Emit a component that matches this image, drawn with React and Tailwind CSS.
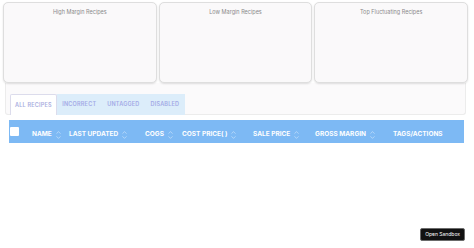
import { ChevronUp, ChevronDown } from "lucide-react";

const cards = ["High Margin Recipes", "Low Margin Recipes", "Top Fluctuating Recipes"];
const tabs = ["ALL RECIPES", "INCORRECT", "UNTAGGED", "DISABLED"];
const columns = [
  { label: "NAME", w: "w-[37px]" },
  { label: "LAST UPDATED", w: "w-[76px]" },
  { label: "COGS", w: "w-[37px]" },
  { label: "COST PRICE( )", w: "w-[71px]" },
  { label: "SALE PRICE", w: "w-[62px]" },
  { label: "GROSS MARGIN", w: "w-[78px]" },
];

function SortIcon() {
  return (
    <span className="ml-[3px] flex flex-col items-center text-white/70">
      <ChevronUp size={7} strokeWidth={2} className="-mb-[2px]" />
      <ChevronDown size={7} strokeWidth={2} />
    </span>
  );
}

export default function App() {
  return (
    <div className="relative h-[248px] w-full bg-white font-['Inter','Liberation_Sans',sans-serif]">
      <div className="flex gap-[2px] pl-[3px] pr-[6px] pt-[2px]">
        {cards.map((c) => (
          <div
            key={c}
            className="h-[81px] flex-1 rounded-[5px] border border-[#dedede] bg-[#faf9fa] pt-[5px] text-center text-[5.5px] text-[#8a8a8a] shadow-[0_1px_2px_rgba(0,0,0,0.12)]"
          >
            {c}
          </div>
        ))}
      </div>

      <div className="ml-[5px] mr-[8px] h-[32px] rounded-b-[3px] border-x border-b border-[#ececec] bg-[#fbfafb] pl-[4px] pt-[11px]">
        <div className="flex h-[21px] items-stretch">
          {tabs.map((t, i) => (
            <div
              key={t}
              className={
                i === 0
                  ? "flex items-center whitespace-nowrap rounded-t-[2px] border border-b-0 border-[#dcdcec] bg-white px-[4px] text-[5.5px] font-semibold tracking-[0.2px] text-[#a9aee0]"
                  : "flex items-center whitespace-nowrap bg-[#dcedfa] px-[5.5px] text-[5.5px] font-semibold tracking-[0.2px] text-[#a3a9e6]"
              }
            >
              {t}
            </div>
          ))}
        </div>
      </div>

      <div className="ml-[9px] mr-[10px] mt-[5px] flex h-[23px] items-start bg-[#7db9f4] pl-[1px] text-[6.5px] font-bold text-white">
        <div className="mt-[7px] h-[9px] w-[9px] shrink-0 rounded-[1px] bg-white" />
        <div className="ml-[13px] mt-[9px] flex items-center">
          {columns.map((col) => (
            <div key={col.label} className={`flex shrink-0 items-center whitespace-nowrap ${col.w}`}>
              <span>{col.label}</span>
              <SortIcon />
            </div>
          ))}
          <span className="whitespace-nowrap">TAGS/ACTIONS</span>
        </div>
      </div>

      <div className="absolute right-[9px] top-[228px] flex h-[13px] items-center rounded-[2px] border border-[#6b6b6b] bg-[#111] px-[4px] text-[5px] text-white">
        Open Sandbox
      </div>
    </div>
  );
}
